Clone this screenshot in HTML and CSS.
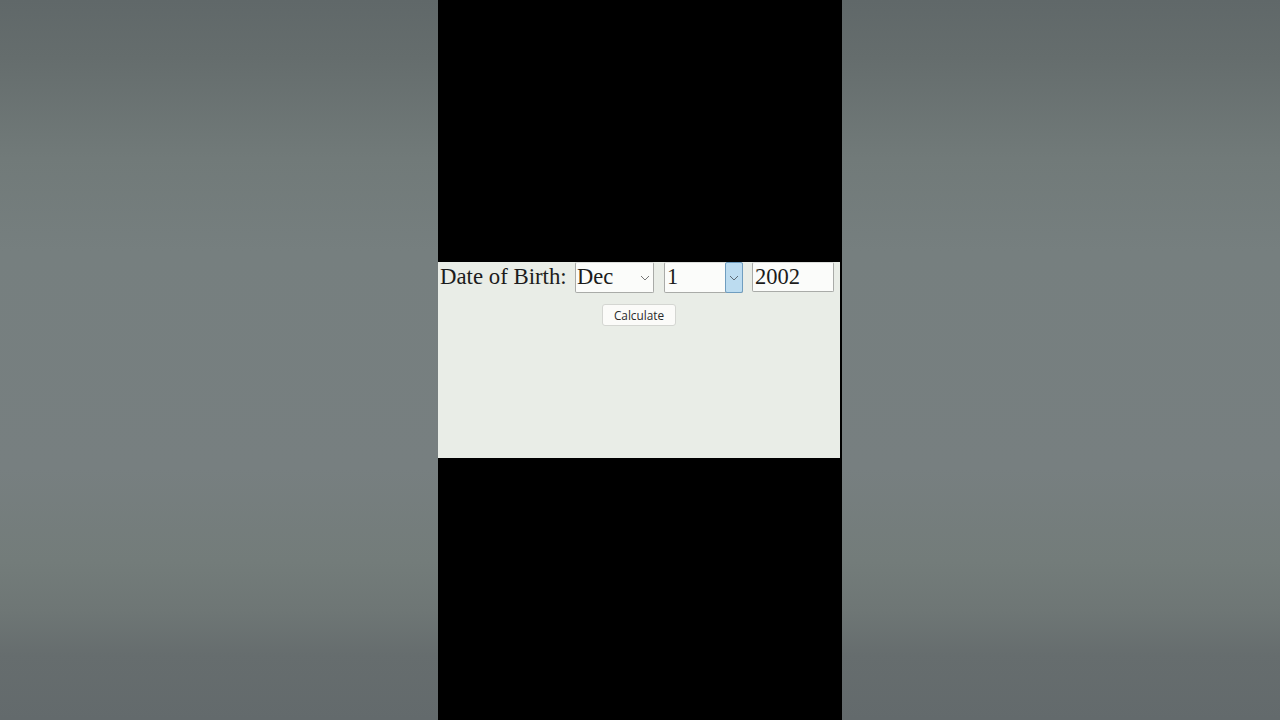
FILE: index.html
```html
<!DOCTYPE html>
<html lang="en">
<head>
    <meta charset="UTF-8">
    <meta name="viewport" content="width=device-width, initial-scale=1.0">
    <title>Date of Birth</title>
    <link rel="stylesheet" href="styles.css">
</head>
<body>
    <div class="side"></div>
    <main class="video">
        <section class="panel">
            <div class="dob-row">
                <span class="dob-label">Date of Birth:</span>
                <div class="field select month">
                    <span class="value">Dec</span>
                    <span class="arrow">
                        <svg width="10" height="6" viewBox="0 0 10 6"><path d="M1 1l4 4 4-4" fill="none" stroke="#777" stroke-width="1"/></svg>
                    </span>
                </div>
                <div class="field select day">
                    <span class="value">1</span>
                    <span class="arrow active">
                        <svg width="10" height="6" viewBox="0 0 10 6"><path d="M1 1l4 4 4-4" fill="none" stroke="#5d6b75" stroke-width="1"/></svg>
                    </span>
                </div>
                <div class="field year">
                    <span class="value">2002</span>
                </div>
            </div>
            <div class="actions">
                <button class="calc-btn" type="button">Calculate</button>
            </div>
        </section>
    </main>
    <div class="side"></div>
</body>
</html>
```

FILE: styles.css
```css
* {
    margin: 0;
    padding: 0;
    box-sizing: border-box;
}

body {
    width: 1280px;
    height: 720px;
    display: flex;
    overflow: hidden;
    background: #000;
}

/* Blurred video fill either side of the clip */
.side {
    width: 438px;
    height: 720px;
    background: linear-gradient(to bottom, #606869 0%, #656d6d 8%, #717a79 22%, #767f7f 35%, #777f80 65%, #737c7a 78%, #6e7675 85%, #666d6e 91%, #636a6c 100%);
}

.video {
    width: 404px;
    height: 720px;
    padding: 262px 2px 0 0;
    background: #000;
}

.panel {
    height: 196px;
    background: #e9ede7;
    font-family: "Liberation Serif", "Times New Roman", serif;
    color: #1c1c1c;
}

.dob-row {
    display: flex;
    align-items: flex-start;
    padding-left: 2px;
}

.dob-label {
    width: 135px;
    height: 30px;
    font-size: 22.8px;
    line-height: 30px;
    white-space: nowrap;
}

.field {
    display: flex;
    align-items: center;
    background: #fbfcfa;
    border: 1px solid #a9aba8;
    border-top-color: #dcdedb;
    border-radius: 2px;
    font-size: 22.5px;
    line-height: 28px;
}

.value {
    flex: 1;
    padding: 0 0 2px 1px;
}

.select {
    width: 79px;
    height: 31px;
}

.month {
    margin-right: 10px;
}

.day {
    margin-right: 9px;
}

.day .value {
    padding-left: 2px;
}

.arrow {
    display: flex;
    align-items: center;
    justify-content: center;
    width: 17px;
    height: 100%;
}

.arrow.active {
    margin: -1px -1px -1px 0;
    width: 18px;
    height: 31px;
    background: #bcdcf0;
    border: 1px solid #6f9dbf;
    border-radius: 2px;
}

.year {
    width: 82px;
    height: 30px;
}

.year .value {
    padding: 0 0 0 2px;
}

.actions {
    display: flex;
    justify-content: center;
    padding-top: 11px;
}

.calc-btn {
    width: 74px;
    height: 22px;
    background: #fbfbf9;
    border: 1px solid #d4d6d2;
    border-radius: 3px;
    font-family: "Open Sans", "Noto Sans", sans-serif;
    font-size: 11.8px;
    color: #2a2a2a;
}
```
